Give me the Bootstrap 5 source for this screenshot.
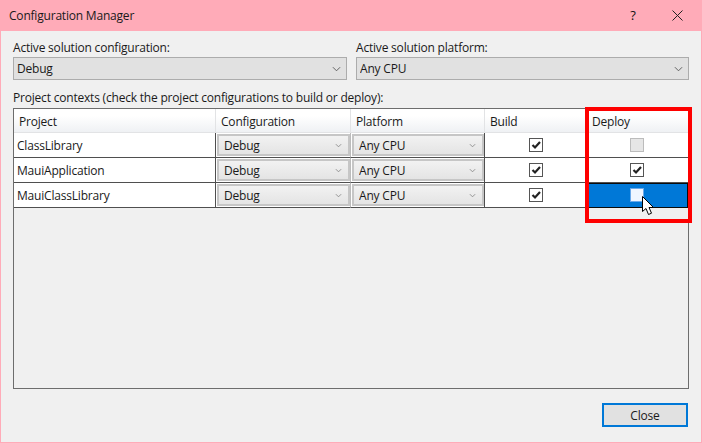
<!DOCTYPE html>
<html lang="en">
<head>
<meta charset="UTF-8">
<title>Configuration Manager</title>
<link href="https://cdn.jsdelivr.net/npm/bootstrap@5.3.3/dist/css/bootstrap.min.css" rel="stylesheet">
<style>
html, body { margin:0; height:443px; overflow:hidden; }
body {
    background:#f0f0f0;
    font-family:"Open Sans","Noto Sans",sans-serif;
    font-size:12px;
    letter-spacing:-.2px;
    color:#1a1a1a;
}
.dlg {
    position:relative;
    width:702px;
    height:443px;
    border:1px solid #ffabb8;
    border-top:0;
}
.titlebar {
    height:31px;
    margin:0 -1px;
    background:#ffabb8;
    padding:0 0 0 9px;
    font-size:12px;
}
.titlebar .q { width:20px; text-align:center; margin-right:29px; font-size:13px; color:#111; }
.titlebar svg { margin-right:19px; }
.dlg-body { padding:9px 12px 0 12px; }
.lbl { line-height:16px; height:16px; }
.top-sel { width:334px; }
.top-sel.second { width:333px; }
.form-select.sel {
    height:23px;
    min-height:0;
    margin-top:1px;
    padding:0 20px 0 3px;
    font-size:12px;
    letter-spacing:-.2px;
    line-height:20px;
    color:#1a1a1a;
    border:1px solid #acacac;
    border-radius:0;
    background-color:#e1e1e1;
    background-image:url("data:image/svg+xml,%3csvg xmlns='http://www.w3.org/2000/svg' viewBox='0 0 10 6'%3e%3cpath fill='none' stroke='%23555' d='M1 1l4 4 4-4'/%3e%3c/svg%3e");
    background-size:9px 6px;
    background-position:right 5px center;
}
.lbl.ctx { margin-top:10px; }
.grid-wrap {
    height:281px;
    margin-top:2px;
    border:1px solid #6d6d6d;
}
.cfg-table { table-layout:fixed; width:100%; margin:0; border-collapse:separate; border-spacing:0; }
.cfg-table > :not(caption) > * > * {
    padding:0;
    background:#fff;
    color:#1a1a1a;
    box-shadow:none;
    border:0;
}
.cfg-table > thead > tr > th {
    height:24px;
    font-weight:400;
    padding:3px 0 0 5px;
    vertical-align:middle;
    background:linear-gradient(#fff 30%,#eff1f4) !important;
    border-bottom:1px solid #e2e3e5 !important;
    border-right:1px solid #e2e3e5 !important;
}
.cfg-table > thead > tr > th:last-child { border-right:0 !important; }
.cfg-table td {
    height:25px;
    vertical-align:middle;
    border-bottom:1px solid #4f4f4f !important;
}
.cfg-table > tbody > tr > td.nm { padding:2px 0 0 3px; border-right:1px solid #4f4f4f !important; }
.cfg-table > tbody > tr > td.mid { border-right:1px solid #bcbcbc !important; padding:1px 0 1px 1px; }
.cfg-table > tbody > tr > td.mid2 { border-right:1px solid #4f4f4f !important; padding:1px 0 1px 1px; }
.cfg-table > tbody > tr > td.chk { text-align:center; padding-right:1px; }
.cfg-table td.act { background:#0078d7 !important; outline:1px solid #0b0b0b; outline-offset:-1px; }
.form-select.cell {
    height:22px;
    padding:1px 20px 0 5px;
    border:2px solid #c6c6c6;
    border-radius:0;
    font-size:12px;
    letter-spacing:-.2px;
    line-height:18px;
    color:#1a1a1a;
    background-color:#e6e6e6;
    background-image:url("data:image/svg+xml,%3csvg xmlns='http://www.w3.org/2000/svg' viewBox='0 0 8 5'%3e%3cpath fill='none' stroke='%23888' d='M1 1l3 3 3-3'/%3e%3c/svg%3e"),linear-gradient(#f2f2f2,#e4e4e4);
    background-size:7px 5px,100% 100%;
    background-position:right 6px center,0 0;
    background-repeat:no-repeat;
}
.cb {
    display:inline-block;
    width:14px;
    height:14px;
    border:1px solid #555;
    background:#fff;
    vertical-align:middle;
    margin-bottom:1px;
}
.cb svg { display:block; }
.cb.off { background:#e6e6e6; border-color:#bcbcbc; }
.cb.hot { background:#f0f6ff; border-color:#6aa9ea; }
.foot { padding-top:14px; padding-right:1px; }
.btn.close-btn {
    width:86px;
    height:24px;
    padding:1px 0 0;
    font-size:12px;
    letter-spacing:-.2px;
    line-height:18px;
    color:#1a1a1a;
    background:#e1e1e1;
    border:2px solid #0078d7;
    border-radius:0;
}
.red-box {
    position:absolute;
    left:584px;
    top:107px;
    width:107px;
    height:116px;
    border:4px solid #fe0000;
    pointer-events:none;
}
.arrow-cur { position:absolute; left:641px; top:196px; }
</style>
</head>
<body>
<div class="dlg">
  <div class="titlebar d-flex align-items-center">
    <span class="flex-grow-1">Configuration Manager</span>
    <span class="q">?</span>
    <svg width="11" height="11" viewBox="0 0 11 11"><path d="M.5.5l10 10M10.500.5l-10 10" stroke="#222" fill="none"/></svg>
  </div>
  <div class="dlg-body">
    <div class="d-flex justify-content-between">
      <div class="top-sel">
        <div class="lbl">Active solution configuration:</div>
        <select class="form-select sel"><option>Debug</option></select>
      </div>
      <div class="top-sel second">
        <div class="lbl">Active solution platform:</div>
        <select class="form-select sel"><option>Any CPU</option></select>
      </div>
    </div>
    <div class="lbl ctx">Project contexts (check the project configurations to build or deploy):</div>
    <div class="grid-wrap">
      <table class="table cfg-table">
        <colgroup><col style="width:202px"><col style="width:135px"><col style="width:134px"><col style="width:102px"><col></colgroup>
        <thead>
          <tr><th>Project</th><th>Configuration</th><th>Platform</th><th>Build</th><th>Deploy</th></tr>
        </thead>
        <tbody>
          <tr>
            <td class="nm">ClassLibrary</td>
            <td class="mid"><select class="form-select cell"><option>Debug</option></select></td>
            <td class="mid2"><select class="form-select cell"><option>Any CPU</option></select></td>
            <td class="chk"><span class="cb"><svg width="12" height="12" viewBox="0 0 12 12"><path d="M2.500 6l2.500 2.500L10 3" fill="none" stroke="#222" stroke-width="2.200"/></svg></span></td>
            <td class="chk"><span class="cb off"></span></td>
          </tr>
          <tr>
            <td class="nm">MauiApplication</td>
            <td class="mid"><select class="form-select cell"><option>Debug</option></select></td>
            <td class="mid2"><select class="form-select cell"><option>Any CPU</option></select></td>
            <td class="chk"><span class="cb"><svg width="12" height="12" viewBox="0 0 12 12"><path d="M2.500 6l2.500 2.500L10 3" fill="none" stroke="#222" stroke-width="2.200"/></svg></span></td>
            <td class="chk"><span class="cb"><svg width="12" height="12" viewBox="0 0 12 12"><path d="M2.500 6l2.500 2.500L10 3" fill="none" stroke="#222" stroke-width="2.200"/></svg></span></td>
          </tr>
          <tr>
            <td class="nm">MauiClassLibrary</td>
            <td class="mid"><select class="form-select cell"><option>Debug</option></select></td>
            <td class="mid2"><select class="form-select cell"><option>Any CPU</option></select></td>
            <td class="chk"><span class="cb"><svg width="12" height="12" viewBox="0 0 12 12"><path d="M2.500 6l2.500 2.500L10 3" fill="none" stroke="#222" stroke-width="2.200"/></svg></span></td>
            <td class="chk act"><span class="cb hot"></span></td>
          </tr>
        </tbody>
      </table>
    </div>
    <div class="foot d-flex justify-content-end">
      <button class="btn close-btn">Close</button>
    </div>
  </div>
  <div class="red-box"></div>
  <svg class="arrow-cur" width="13" height="21" viewBox="0 0 13 21"><path d="M.5.5v15l3.500-3 2.500 6 3-1.300-2.500-5.700h4.500z" fill="#fff" stroke="#000"/></svg>
</div>
<script src="https://cdn.jsdelivr.net/npm/bootstrap@5.3.3/dist/js/bootstrap.bundle.min.js"></script>
</body>
</html>
